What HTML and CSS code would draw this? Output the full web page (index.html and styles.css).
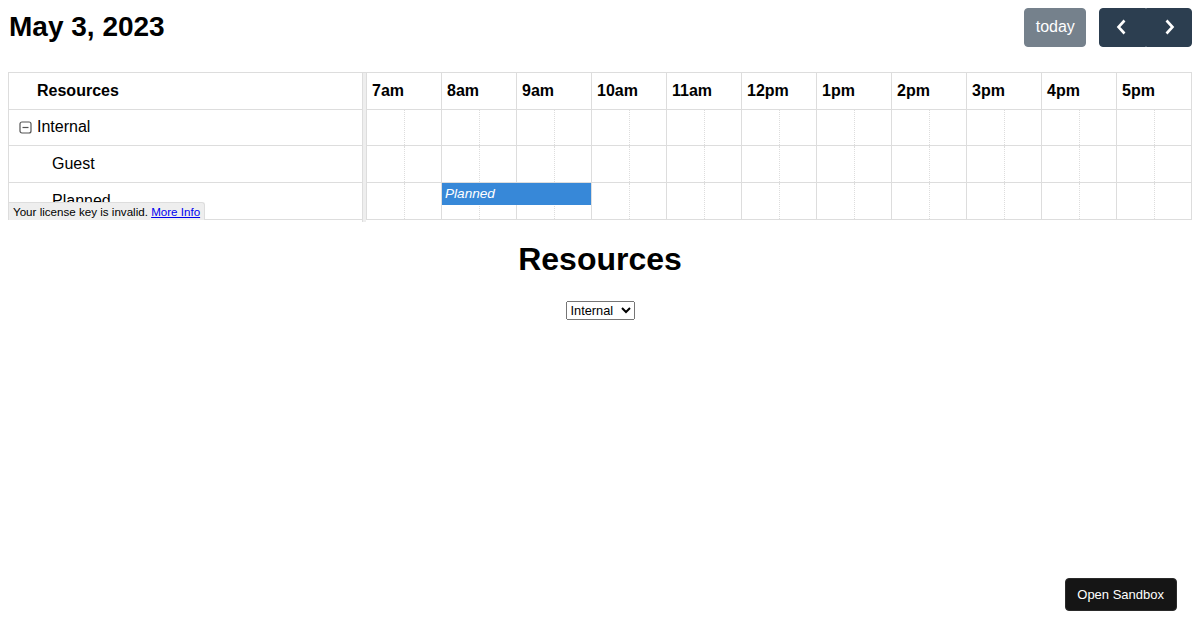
FILE: index.html
```html
<!DOCTYPE html>
<html lang="en">
<head>
  <meta charset="UTF-8" />
  <meta name="viewport" content="width=device-width, initial-scale=1" />
  <title>Resource Timeline</title>
  <link rel="stylesheet" href="styles.css">
</head>
<body>

  <div class="toolbar">
    <h2 class="title">May 3, 2023</h2>
    <div class="toolbar-right">
      <button class="btn" disabled>today</button>
      <div class="btn-group">
        <button class="btn btn-icon" aria-label="prev">
          <svg width="24" height="24" viewBox="0 0 24 24"><path d="M14.5 5.5 L8.5 12 L14.5 18.5" /></svg>
        </button>
        <button class="btn btn-icon" aria-label="next">
          <svg width="24" height="24" viewBox="0 0 24 24"><path d="M9.5 5.5 L15.5 12 L9.5 18.5" /></svg>
        </button>
      </div>
    </div>
  </div>

  <div class="view">
    <div class="datagrid">
      <div class="dg-row dg-head"><span class="dg-label">Resources</span></div>
      <div class="dg-row short">
        <span class="expander">
          <svg width="13" height="13" viewBox="0 0 13 13"><rect x="1" y="1" width="11" height="11" rx="2" /><path d="M3.5 6.5 H9.5" /></svg>
        </span>
        <span>Internal</span>
      </div>
      <div class="dg-row dg-child">Guest</div>
      <div class="dg-row dg-child">Planned</div>
    </div>

    <div class="divider"></div>

    <div class="timeline">
      <div class="tl-head">
        <div class="slot-label">7am</div>
        <div class="slot-label">8am</div>
        <div class="slot-label">9am</div>
        <div class="slot-label">10am</div>
        <div class="slot-label">11am</div>
        <div class="slot-label">12pm</div>
        <div class="slot-label">1pm</div>
        <div class="slot-label">2pm</div>
        <div class="slot-label">3pm</div>
        <div class="slot-label">4pm</div>
        <div class="slot-label">5pm</div>
      </div>

      <div class="lane short">
        <div class="slot"><i></i><i></i></div><div class="slot"><i></i><i></i></div><div class="slot"><i></i><i></i></div>
        <div class="slot"><i></i><i></i></div><div class="slot"><i></i><i></i></div><div class="slot"><i></i><i></i></div>
        <div class="slot"><i></i><i></i></div><div class="slot"><i></i><i></i></div><div class="slot"><i></i><i></i></div>
        <div class="slot"><i></i><i></i></div><div class="slot"><i></i><i></i></div>
      </div>
      <div class="lane">
        <div class="slot"><i></i><i></i></div><div class="slot"><i></i><i></i></div><div class="slot"><i></i><i></i></div>
        <div class="slot"><i></i><i></i></div><div class="slot"><i></i><i></i></div><div class="slot"><i></i><i></i></div>
        <div class="slot"><i></i><i></i></div><div class="slot"><i></i><i></i></div><div class="slot"><i></i><i></i></div>
        <div class="slot"><i></i><i></i></div><div class="slot"><i></i><i></i></div>
      </div>
      <div class="lane">
        <div class="slot"><i></i><i></i></div><div class="slot"><i></i><i></i></div><div class="slot"><i></i><i></i></div>
        <div class="slot"><i></i><i></i></div><div class="slot"><i></i><i></i></div><div class="slot"><i></i><i></i></div>
        <div class="slot"><i></i><i></i></div><div class="slot"><i></i><i></i></div><div class="slot"><i></i><i></i></div>
        <div class="slot"><i></i><i></i></div><div class="slot"><i></i><i></i></div>
        <div class="event">Planned</div>
      </div>
    </div>

    <div class="license">Your license key is invalid. <a href="#">More Info</a></div>
  </div>

  <h1 class="heading">Resources</h1>
  <div class="picker">
    <select>
      <option>Internal</option>
      <option>External</option>
    </select>
  </div>

  <button class="sandbox">Open Sandbox</button>

</body>
</html>
```

FILE: styles.css
```css
* { box-sizing: border-box; }
body {
  margin: 8px;
  font-family: "Liberation Sans", Arial, sans-serif;
  font-size: 16px;
  color: #000;
  background: #fff;
}

/* toolbar */
.toolbar {
  display: flex;
  justify-content: space-between;
  align-items: center;
  margin-bottom: 25px;
}
.title {
  margin: 0;
  font-size: 28px;
  font-weight: bold;
  padding-left: 1px;
}
.toolbar-right { display: flex; align-items: center; }
.btn {
  font-family: inherit;
  font-size: 16px;
  line-height: 1.5;
  padding: 6.4px 10.4px;
  border: 1px solid #2c3e50;
  border-radius: 4px;
  background-color: #2c3e50;
  color: #fff;
  cursor: pointer;
}
.btn:disabled { opacity: .65; cursor: default; }
.btn-group { display: flex; margin-left: 13px; }
.btn-group .btn:first-child { border-radius: 4px 0 0 4px; }
.btn-group .btn:last-child { border-radius: 0 4px 4px 0; }
.btn-icon { display: flex; align-items: center; padding: 6.4px 10.2px; }
.btn-icon svg { display: block; }
.btn-icon path { fill: none; stroke: #fff; stroke-width: 2.6; }

/* calendar view */
.view {
  position: relative;
  display: flex;
  width: 1184px;
  border-top: 1px solid #ddd;
  border-left: 1px solid #ddd;
}
.datagrid { width: 353px; }
.dg-row {
  display: flex;
  align-items: center;
  height: 37px;
  padding-left: 28px;
  border-bottom: 1px solid #ddd;
}
.dg-row.short { height: 36px; }
.dg-head { font-weight: bold; }
.dg-child { padding-left: 43px; }
.expander { display: flex; margin: 0 5px 0 -18px; }
.expander rect { fill: none; stroke: #555; stroke-width: 1.2; }
.expander path { stroke: #555; stroke-width: 1.2; }

.divider {
  width: 4px;
  border-left: 1px solid #ddd;
  background: #eee;
  margin-bottom: -2px;
}

.timeline { width: 826px; border-right: 1px solid #ddd; }
.tl-head, .lane {
  display: grid;
  grid-template-columns: repeat(11, 75px);
  height: 37px;
  border-bottom: 1px solid #ddd;
}
.lane.short { height: 36px; }
.slot-label {
  display: flex;
  align-items: center;
  padding-left: 5px;
  font-weight: bold;
  border-left: 1px solid #ddd;
}
.lane { position: relative; }
.slot { display: flex; border-left: 1px solid #ddd; }
.slot i { flex: 1; }
.slot i + i { border-left: 1px dotted #ddd; }

.event {
  position: absolute;
  top: 0;
  left: 76px;
  width: 149px;
  height: 22px;
  padding-left: 3px;
  background: #3788d8;
  color: #fff;
  font-style: italic;
  font-size: 13.6px;
  line-height: 22px;
}

.license {
  position: absolute;
  left: 0;
  bottom: 0;
  padding: 2px 4px;
  font-size: 11.6px;
  background: #eee;
  border: 1px solid #ddd;
  border-width: 1px 1px 0 0;
  border-top-right-radius: 3px;
}
.license a { color: #00e; }

.heading {
  margin: 21px 0 21px;
  text-align: center;
  font-size: 32px;
}
.picker { text-align: center; margin-top: 23px; }
.picker select { font-family: "Liberation Sans", Arial, sans-serif; font-size: 12.8px; }

.sandbox {
  position: fixed;
  right: 23px;
  bottom: 19px;
  height: 33px;
  padding: 0 12px 0 11px;
  font-family: "Liberation Sans", Arial, sans-serif;
  font-size: 13px;
  color: #fff;
  background: #151515;
  border: 1px solid #2a2a2a;
  border-radius: 4px;
}
```
